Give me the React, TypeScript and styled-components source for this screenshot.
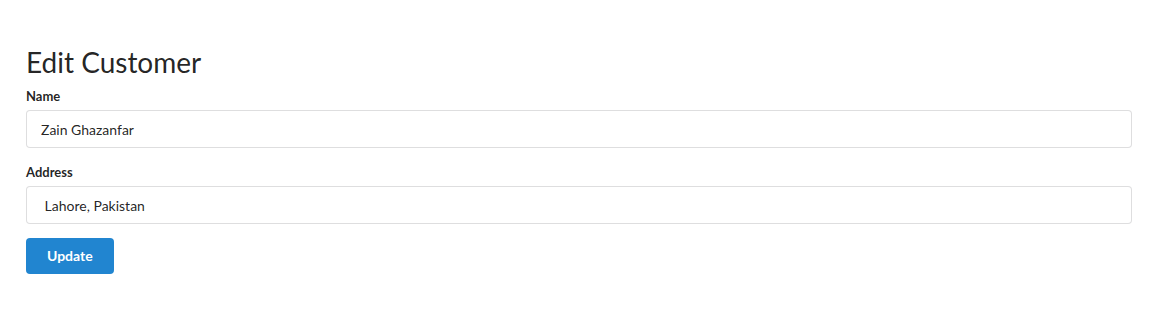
import React from "react";
import styled, { createGlobalStyle } from "styled-components";

const Global = createGlobalStyle`
  html, body { margin: 0; padding: 0; background: #fff; }
  body {
    font-family: Lato, "Helvetica Neue", Arial, sans-serif;
    font-size: 14px;
    line-height: 1.4285em;
    color: rgba(0, 0, 0, 0.87);
  }
  * { box-sizing: border-box; }
`;

const Page = styled.div`
  padding: 44px 27px 0 26px;
  width: 1159px;
`;

const Heading = styled.h1`
  margin: 0 0 7px;
  font-family: Lato, "Helvetica Neue", Arial, sans-serif;
  font-size: 28px;
  font-weight: 400;
  line-height: 36px;
  color: rgba(0, 0, 0, 0.87);
`;

const Form = styled.form`
  display: flex;
  flex-direction: column;
`;

const Field = styled.div`
  display: flex;
  flex-direction: column;
  margin-bottom: 14px;

  & + & {
    margin-top: 1px;
  }
`;

const Label = styled.label`
  display: block;
  font-size: 13px;
  font-weight: 700;
  line-height: 19px;
  margin: 0 0 4px;
  color: rgba(0, 0, 0, 0.87);
`;

const Input = styled.input`
  width: 100%;
  height: 38px;
  margin: 0;
  padding: 9.5px 14px;
  font-family: Lato, "Helvetica Neue", Arial, sans-serif;
  font-size: 14px;
  line-height: 17px;
  color: rgba(0, 0, 0, 0.87);
  background: #fff;
  border: 1px solid rgba(34, 36, 38, 0.15);
  border-radius: 4px;
  outline: none;
`;

const Button = styled.button`
  align-self: flex-start;
  height: 36px;
  padding: 0 21px;
  font-family: Lato, "Helvetica Neue", Arial, sans-serif;
  font-size: 14px;
  font-weight: 700;
  line-height: 1em;
  color: #fff;
  background: #2185d0;
  border: none;
  border-radius: 4px;
  cursor: pointer;
`;

export default function App() {
  return (
    <>
      <Global />
      <Page>
        <Heading>Edit Customer</Heading>
        <Form onSubmit={(e) => e.preventDefault()}>
          <Field>
            <Label>Name</Label>
            <Input defaultValue="Zain Ghazanfar" />
          </Field>
          <Field>
            <Label>Address</Label>
            <Input defaultValue=" Lahore, Pakistan" />
          </Field>
          <Button type="submit">Update</Button>
        </Form>
      </Page>
    </>
  );
}
